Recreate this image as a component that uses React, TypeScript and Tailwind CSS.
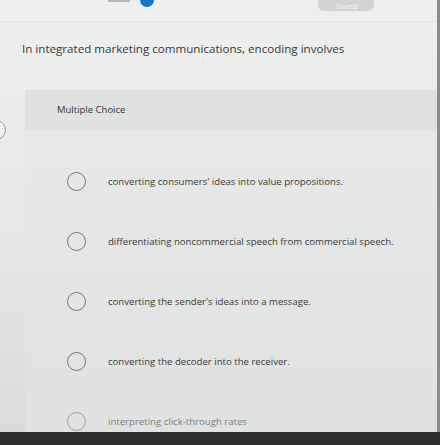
import React from "react";

const options = [
  "converting consumers' ideas into value propositions.",
  "differentiating noncommercial speech from commercial speech.",
  "converting the sender's ideas into a message.",
  "converting the decoder into the receiver.",
  "interpreting click-through rates",
];

export default function App() {
  return (
    <div
      className="relative w-[440px] h-[445px] overflow-hidden bg-[#e7eae8] text-[#333]"
      style={{ fontFamily: '"Open Sans", "Liberation Sans", sans-serif' }}
    >
      <div className="flex flex-col h-[432px] bg-gradient-to-b from-[#eef0ef] via-[#e6e9e7] to-[#d9dcda]">
        {/* header strip */}
        <div className="relative h-[22px] border-b border-[#dfe2e0] flex items-start shrink-0">
          <span className="ml-[108px] mt-0 w-[22px] h-[2px] bg-[#b5b8b6]" />
          <span className="ml-[10px] -mt-[7px] w-[14px] h-[14px] rounded-full bg-[#1a73c9]" />
          <div className="ml-auto mr-[66px] -mt-[5px] w-[56px] h-[16px] rounded-[6px] bg-[#d2d4d3] flex items-end justify-center pb-[1px]">
            <span className="text-[8px] leading-[9px] text-[#f6f6f6]">Saved</span>
          </div>
        </div>

        {/* question */}
        <div className="pl-[22px] pt-[19px] text-[11.6px] leading-[16px] text-[#383838]">
          In integrated marketing communications, encoding involves
        </div>

        {/* panel */}
        <div className="relative ml-[25px] mr-[3px] mt-[33px] flex-1 flex flex-col">
          <div className="h-[40px] bg-[#dfe2e0] flex items-center pl-[32px] shrink-0">
            <span className="text-[9.5px] text-[#333]">Multiple Choice</span>
          </div>
          <div className="flex-1 bg-gradient-to-b from-[#e6e9e7] to-[#dfe2e0] flex flex-col pt-[41px] gap-[40px]">
            {options.map((o, i) => (
              <div key={i} className={"flex items-center h-[20px] " + (i === 4 ? "opacity-60" : "")}>
                <span className="ml-[42px] w-[19px] h-[19px] rounded-full border-[1.5px] border-[#777] shrink-0" />
                <span className="ml-[22px] mt-[3px] text-[9.6px] text-[#3a3a3a]">{o}</span>
              </div>
            ))}
          </div>
        </div>
      </div>

      {/* left edge partial control */}
      <div className="absolute left-[-14px] top-[120px] w-[20px] h-[20px] rounded-full border border-[#999] bg-[#eef0ef]" />

      {/* right screen edge */}
      <div className="absolute right-0 top-0 w-[3px] h-full bg-[#8a8c8b]" />
      {/* bottom bezel */}
      <div className="absolute left-0 bottom-0 w-full h-[13px] bg-[#2d2d2d]" />
    </div>
  );
}
